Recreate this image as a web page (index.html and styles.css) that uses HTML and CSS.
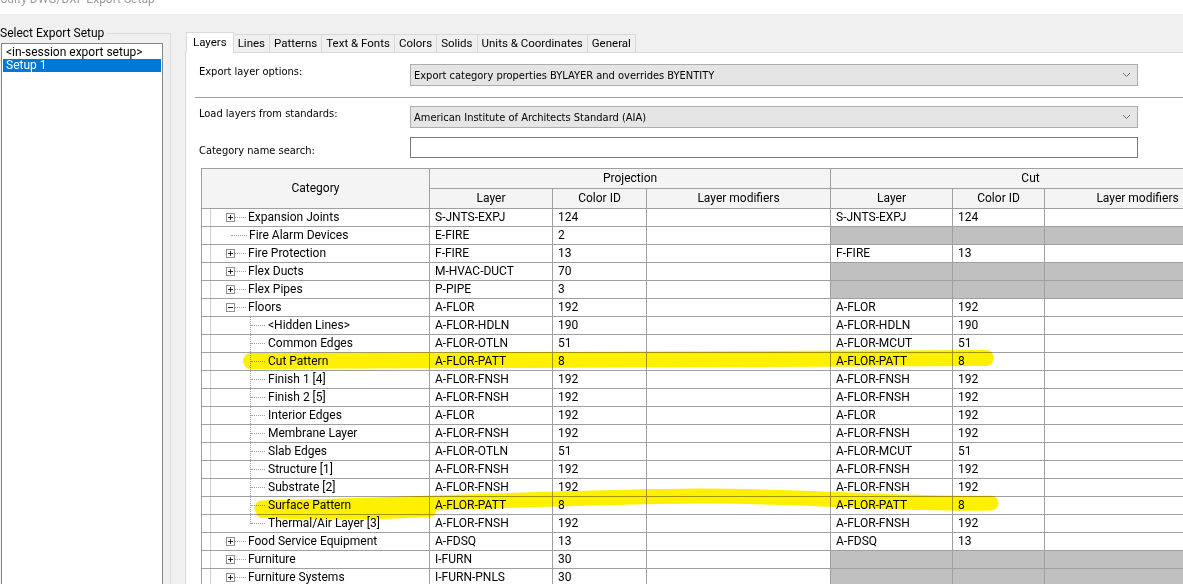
FILE: index.html
```html
<!DOCTYPE html>
<html>
<head>
<meta charset="utf-8">
<link rel="stylesheet" href="styles.css">
</head>
<body>
<div class="titlebar"><span class="title">Modify DWG/DXF Export Setup</span></div>
<div class="content">
  <div class="left">
    <fieldset class="group">
      <legend class="group-title">Select Export Setup</legend>
      <div class="listbox">
        <div class="item">&lt;in-session export setup&gt;</div>
        <div class="item selected">Setup 1</div>
      </div>
    </fieldset>
  </div>
  <div class="right">
    <div class="tabs">
      <div class="tab active">Layers</div>
      <div class="tab">Lines</div>
      <div class="tab">Patterns</div>
      <div class="tab">Text &amp; Fonts</div>
      <div class="tab">Colors</div>
      <div class="tab">Solids</div>
      <div class="tab">Units &amp; Coordinates</div>
      <div class="tab">General</div>
    </div>
    <div class="panel">
      <div class="field">
        <div class="label up cond">Export layer options:</div>
        <div class="select cond"><span>Export category properties BYLAYER and overrides BYENTITY</span>
          <svg class="chev" width="9" height="6" viewBox="0 0 9 6"><polyline points="1,1 4.5,4.5 8,1" fill="none" stroke="#6d6d6d" stroke-width="1"/></svg></div>
      </div>
      <div class="sep"></div>
      <div class="field f2">
        <div class="label up cond">Load layers from standards:</div>
        <div class="select cond"><span>American Institute of Architects Standard (AIA)</span>
          <svg class="chev" width="9" height="6" viewBox="0 0 9 6"><polyline points="1,1 4.5,4.5 8,1" fill="none" stroke="#6d6d6d" stroke-width="1"/></svg></div>
      </div>
      <div class="field f3">
        <div class="label down cond">Category name search:</div>
        <div class="search"></div>
      </div>
      <table class="grid">
        <colgroup>
          <col class="c-cat"><col class="c-layer"><col class="c-color"><col class="c-mod">
          <col class="c-layer2"><col class="c-color2"><col class="c-mod2">
        </colgroup>
        <thead>
          <tr class="h1"><th rowspan="2">Category</th><th colspan="3">Projection</th><th colspan="3">Cut</th></tr>
          <tr class="h2"><th>Layer</th><th>Color ID</th><th>Layer modifiers</th><th>Layer</th><th>Color ID</th><th>Layer modifiers</th></tr>
        </thead>
        <tbody>
          <tr><td class="cat"><div class="node"><span class="box plus"></span><span class="hl"></span><span class="lbl">Expansion Joints</span></div></td><td>S-JNTS-EXPJ</td><td>124</td><td></td><td>S-JNTS-EXPJ</td><td>124</td><td></td></tr>
          <tr><td class="cat"><div class="node leaf"><span class="hl"></span><span class="lbl">Fire Alarm Devices</span></div></td><td>E-FIRE</td><td>2</td><td></td><td class="na"></td><td class="na"></td><td class="na"></td></tr>
          <tr><td class="cat"><div class="node"><span class="box plus"></span><span class="hl"></span><span class="lbl">Fire Protection</span></div></td><td>F-FIRE</td><td>13</td><td></td><td>F-FIRE</td><td>13</td><td></td></tr>
          <tr><td class="cat"><div class="node"><span class="box plus"></span><span class="hl"></span><span class="lbl">Flex Ducts</span></div></td><td>M-HVAC-DUCT</td><td>70</td><td></td><td class="na"></td><td class="na"></td><td class="na"></td></tr>
          <tr><td class="cat"><div class="node"><span class="box plus"></span><span class="hl"></span><span class="lbl">Flex Pipes</span></div></td><td>P-PIPE</td><td>3</td><td></td><td class="na"></td><td class="na"></td><td class="na"></td></tr>
          <tr><td class="cat"><div class="node"><span class="box minus"></span><span class="hl"></span><span class="lbl">Floors</span></div></td><td>A-FLOR</td><td>192</td><td></td><td>A-FLOR</td><td>192</td><td></td></tr>
          <tr><td class="cat"><div class="node child"><span class="vl"></span><span class="hl"></span><span class="lbl">&lt;Hidden Lines&gt;</span></div></td><td>A-FLOR-HDLN</td><td>190</td><td></td><td>A-FLOR-HDLN</td><td>190</td><td></td></tr>
          <tr><td class="cat"><div class="node child"><span class="vl"></span><span class="hl"></span><span class="lbl">Common Edges</span></div></td><td>A-FLOR-OTLN</td><td>51</td><td></td><td>A-FLOR-MCUT</td><td>51</td><td></td></tr>
          <tr><td class="cat"><div class="node child"><span class="vl"></span><span class="hl"></span><span class="lbl">Cut Pattern</span></div></td><td>A-FLOR-PATT</td><td>8</td><td></td><td>A-FLOR-PATT</td><td>8</td><td></td></tr>
          <tr><td class="cat"><div class="node child"><span class="vl"></span><span class="hl"></span><span class="lbl">Finish 1 [4]</span></div></td><td>A-FLOR-FNSH</td><td>192</td><td></td><td>A-FLOR-FNSH</td><td>192</td><td></td></tr>
          <tr><td class="cat"><div class="node child"><span class="vl"></span><span class="hl"></span><span class="lbl">Finish 2 [5]</span></div></td><td>A-FLOR-FNSH</td><td>192</td><td></td><td>A-FLOR-FNSH</td><td>192</td><td></td></tr>
          <tr><td class="cat"><div class="node child"><span class="vl"></span><span class="hl"></span><span class="lbl">Interior Edges</span></div></td><td>A-FLOR</td><td>192</td><td></td><td>A-FLOR</td><td>192</td><td></td></tr>
          <tr><td class="cat"><div class="node child"><span class="vl"></span><span class="hl"></span><span class="lbl">Membrane Layer</span></div></td><td>A-FLOR-FNSH</td><td>192</td><td></td><td>A-FLOR-FNSH</td><td>192</td><td></td></tr>
          <tr><td class="cat"><div class="node child"><span class="vl"></span><span class="hl"></span><span class="lbl">Slab Edges</span></div></td><td>A-FLOR-OTLN</td><td>51</td><td></td><td>A-FLOR-MCUT</td><td>51</td><td></td></tr>
          <tr><td class="cat"><div class="node child"><span class="vl"></span><span class="hl"></span><span class="lbl">Structure [1]</span></div></td><td>A-FLOR-FNSH</td><td>192</td><td></td><td>A-FLOR-FNSH</td><td>192</td><td></td></tr>
          <tr><td class="cat"><div class="node child"><span class="vl"></span><span class="hl"></span><span class="lbl">Substrate [2]</span></div></td><td>A-FLOR-FNSH</td><td>192</td><td></td><td>A-FLOR-FNSH</td><td>192</td><td></td></tr>
          <tr><td class="cat"><div class="node child"><span class="vl"></span><span class="hl"></span><span class="lbl">Surface Pattern</span></div></td><td>A-FLOR-PATT</td><td>8</td><td></td><td>A-FLOR-PATT</td><td>8</td><td></td></tr>
          <tr><td class="cat"><div class="node child last"><span class="vl"></span><span class="hl"></span><span class="lbl">Thermal/Air Layer [3]</span></div></td><td>A-FLOR-FNSH</td><td>192</td><td></td><td>A-FLOR-FNSH</td><td>192</td><td></td></tr>
          <tr><td class="cat"><div class="node"><span class="box plus"></span><span class="hl"></span><span class="lbl">Food Service Equipment</span></div></td><td>A-FDSQ</td><td>13</td><td></td><td>A-FDSQ</td><td>13</td><td></td></tr>
          <tr><td class="cat"><div class="node"><span class="box plus"></span><span class="hl"></span><span class="lbl">Furniture</span></div></td><td>I-FURN</td><td>30</td><td></td><td class="na"></td><td class="na"></td><td class="na"></td></tr>
          <tr><td class="cat"><div class="node"><span class="box plus"></span><span class="hl"></span><span class="lbl">Furniture Systems</span></div></td><td>I-FURN-PNLS</td><td>30</td><td></td><td class="na"></td><td class="na"></td><td class="na"></td></tr>
        </tbody>
      </table>
    </div>
  </div>
</div>
<svg class="marker" width="1183" height="584" viewBox="0 0 1183 584">
  <path d="M251,361 C420,360 700,359 986,358" fill="none" stroke="#fff000" stroke-width="16" stroke-linecap="round"/>
  <path d="M262,508 C420,505 560,497 700,496 C820,496 900,505 991,503" fill="none" stroke="#fff000" stroke-width="15" stroke-linecap="round"/>
  <path d="M262,512 C330,515 380,514 430,511" fill="none" stroke="#fff000" stroke-width="12" stroke-linecap="round"/>
</svg>
</body>
</html>
```
FILE: styles.css
```css
html, body {
  margin: 0;
  padding: 0;
}
body {
  width: 1183px;
  height: 584px;
  overflow: hidden;
  background: #f0f0f0;
  position: relative;
  font-family: Roboto, "Liberation Sans", sans-serif;
  font-size: 12px;
  color: #000;
}
.titlebar {
  height: 14px;
  background: #fff;
  overflow: hidden;
}
.title {
  display: block;
  margin-top: -8px;
  margin-left: -10px;
  font-size: 12px;
  line-height: 14px;
  color: #9c9c9c;
  white-space: nowrap;
}
.content {
  display: flex;
  height: 570px;
}
.left {
  width: 185px;
  flex: none;
}
.group {
  margin: 12px 0 0 0;
  padding: 0;
  width: 171px;
  height: 600px;
  box-sizing: border-box;
  border: 1px solid #dcdcdc;
  border-left: none;
  border-bottom: none;
}
.group-title {
  padding: 0 3px 0 1px;
  margin-left: -1px;
  line-height: 14px;
  font-size: 12px;
}
.listbox {
  margin: 3px 0 0 1px;
  width: 162px;
  height: 600px;
  box-sizing: border-box;
  border: 1px solid #828790;
  background: #fff;
  padding-top: 2px;
}
.item {
  height: 13px;
  line-height: 13px;
  padding-left: 3px;
  margin: 0 1px;
  white-space: nowrap;
}
.item.selected {
  background: #0078d7;
  color: #fff;
}
.right {
  flex: 1;
  min-width: 0;
  padding-top: 18px;
}
.tabs {
  display: flex;
  align-items: flex-end;
  margin-left: 1px;
  height: 20px;
  position: relative;
  z-index: 1;
}
.tab {
  height: 18px;
  line-height: 17px;
  font-size: 11.5px;
  box-sizing: border-box;
  padding: 0 4px;
  border: 1px solid #d9d9d9;
  border-bottom: none;
  border-left: none;
  white-space: nowrap;
}
.tab.active {
  height: 21px;
  margin-bottom: -1px;
  background: #fff;
  border-left: 1px solid #d9d9d9;
  padding: 0 6px;
  line-height: 19px;
}
.panel {
  background: #fff;
  border: 1px solid #d9d9d9;
  border-right: none;
  height: 560px;
  box-sizing: border-box;
  padding: 11px 0 0 13px;
  overflow: hidden;
}
.cond {
  font-family: "Liberation Sans Narrow", "DejaVu Sans Condensed", "Liberation Sans", sans-serif;
  font-size: 11px;
}
.field {
  display: flex;
  align-items: center;
}
.label {
  width: 211px;
  flex: none;
}
.label.up {
  margin-bottom: 8px;
}
.label.down {
  margin-top: 6px;
}
.select {
  width: 728px;
  height: 22px;
  box-sizing: border-box;
  border: 1px solid #adadad;
  background: #e5e5e5;
  display: flex;
  align-items: center;
  justify-content: space-between;
  padding: 0 6px 0 3px;
}
.chev {
  display: block;
}
.sep {
  margin: 11px 0 0 -4px;
  border-top: 1px solid #a0a0a0;
  width: 1000px;
}
.f2 {
  margin-top: 8px;
}
.f3 {
  margin-top: 9px;
}
.search {
  width: 728px;
  height: 21px;
  box-sizing: border-box;
  border: 1px solid #7a7a7a;
  background: #fff;
}
.grid {
  margin: 10px 0 0 2px;
  border-collapse: collapse;
  table-layout: fixed;
  width: 1029px;
  border: 1px solid #8c8c8c;
}
.c-cat { width: 228px; }
.c-layer { width: 123px; }
.c-color { width: 94px; }
.c-mod { width: 184px; }
.c-layer2 { width: 122px; }
.c-color2 { width: 92px; }
.c-mod2 { width: 186px; }
.grid th {
  background: #f4f4f4;
  font-weight: normal;
  border: 1px solid #a0a0a0;
  height: 19px;
  padding: 0;
  line-height: 19px;
  text-align: center;
}
.grid td {
  border: 1px solid #a0a0a0;
  height: 17px;
  padding: 0 0 0 5px;
  line-height: 17px;
  white-space: nowrap;
  overflow: hidden;
  background: #fff;
}
.grid td.cat {
  padding: 0;
  background: #fff linear-gradient(#a0a0a0 50%, transparent 50%) 8px 0 / 1px 2px repeat-y;
}
.grid td.na {
  background: repeating-conic-gradient(#8f8f8f 0 25%, #f0f0f0 0 50%) 0 0 / 2px 2px;
}
.node {
  display: flex;
  align-items: center;
  height: 17px;
  padding-left: 24px;
}
.node.leaf {
  padding-left: 29px;
}
.node.leaf .hl {
  width: 16px;
}
.node.child {
  padding-left: 48px;
}
.box {
  width: 9px;
  height: 9px;
  box-sizing: border-box;
  border: 1px solid #919191;
  flex: none;
}
.box.plus {
  background:
    linear-gradient(#1e1e3c, #1e1e3c) center / 5px 1px no-repeat,
    linear-gradient(#1e1e3c, #1e1e3c) center / 1px 5px no-repeat,
    #fff;
}
.box.minus {
  background:
    linear-gradient(#1e1e3c, #1e1e3c) center / 5px 1px no-repeat,
    #fff;
}
.hl {
  width: 11px;
  height: 0;
  border-top: 1px dotted #a0a0a0;
  flex: none;
}
.vl {
  align-self: stretch;
  width: 0;
  border-left: 1px dotted #a0a0a0;
  flex: none;
}
.node.child .hl {
  width: 14px;
}
.node.child.last .vl {
  align-self: flex-start;
  height: 9px;
}
.lbl {
  margin-left: 2px;
  white-space: nowrap;
}
.node.child .lbl {
  margin-left: 3px;
}
.marker {
  position: absolute;
  left: 0;
  top: 0;
  pointer-events: none;
  mix-blend-mode: multiply;
}
```
